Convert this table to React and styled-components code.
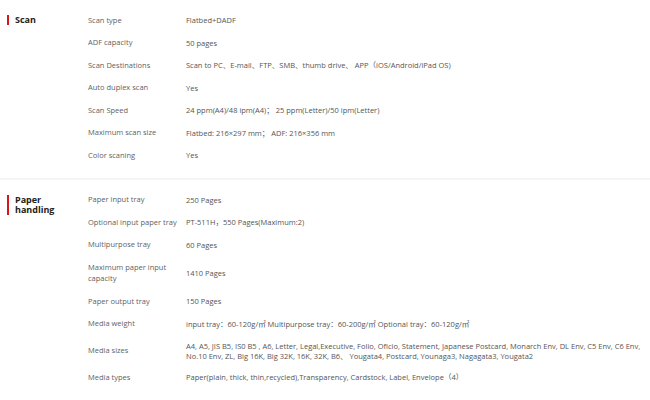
import React from "react";
import styled, {createGlobalStyle} from "styled-components";

const specs = [
    {
        title: "Scan",
        rows: [
            ["Scan type", "Flatbed+DADF"],
            ["ADF capacity", "50 pages"],
            ["Scan Destinations", "Scan to PC、E-mail、FTP、SMB、thumb drive、 APP（iOS/Android/iPad OS)"],
            ["Auto duplex scan", "Yes"],
            ["Scan Speed", "24 ppm(A4)/48 ipm(A4)； 25 ppm(Letter)/50 ipm(Letter)"],
            ["Maximum scan size", "Flatbed: 216×297 mm； ADF: 216×356 mm"],
            ["Color scaning", "Yes"]
        ]
    },
    {
        title: "Paper handling",
        rows: [
            ["Paper input tray", "250 Pages"],
            ["Optional input paper tray", "PT-511H，550 Pages(Maximum:2)"],
            ["Multipurpose tray", "60 Pages"],
            ["Maximum paper input capacity", "1410 Pages"],
            ["Paper output tray", "150 Pages"],
            ["Media weight", "input tray：60-120g/㎡ Multipurpose tray：60-200g/㎡ Optional tray：60-120g/㎡"],
            ["Media sizes", "A4, A5, JIS B5, IS0 B5 , A6, Letter, Legal,Executive, Folio, Oficio, Statement, Japanese Postcard, Monarch Env, DL Env, C5 Env, C6 Env, No.10 Env, ZL, Big 16K, Big 32K, 16K, 32K, B6、 Yougata4, Postcard, Younaga3, Nagagata3, Yougata2"],
            ["Media types", "Paper(plain, thick, thin,recycled),Transparency, Cardstock, Label, Envelope（4）"]
        ]
    }
];

const App = () => {
    return (
        <>
            <GlobalStyle/>
            <Page>
                {
                    specs.map((section) => (
                        <Section key={section.title}>
                            <Heading>
                                <Title>{section.title}</Title>
                            </Heading>
                            <Table>
                                {
                                    section.rows.map(([label, value]) => (
                                        <Row key={label}>
                                            <Label>{label}</Label>
                                            <Value>{value}</Value>
                                        </Row>
                                    ))
                                }
                            </Table>
                        </Section>
                    ))
                }
            </Page>
        </>
    )
}

const GlobalStyle = createGlobalStyle`
  * {
    box-sizing: border-box;
  }

  body {
    margin: 0;
    background: #fff;
    font-family: "Open Sans", "Noto Sans CJK SC", sans-serif;
  }
`;

const Page = styled.div`
  width: 650px;
`;

const Section = styled.section`
  display: flex;
  padding: 9px 0 11px;
  border-bottom: 2px solid #f5f5f5;
`;

const Heading = styled.div`
  flex: 0 0 88px;
  padding-left: 7px;
`;

const Title = styled.h3`
  margin: 6px 0 0;
  width: 50px;
  padding-left: 6px;
  border-left: 2px solid #d7141a;
  font-size: 9px;
  line-height: 10px;
  font-weight: 700;
  color: #222;
`;

const Table = styled.div`
  flex: 1;
  padding-right: 3px;
`;

const Row = styled.div`
  display: flex;
  align-items: center;
  padding: 5.5px 0;
`;

const Label = styled.div`
  flex: 0 0 98px;
  padding-right: 4px;
  font-size: 7.5px;
  line-height: 11.5px;
  color: #5f5f5f;
`;

const Value = styled.div`
  flex: 1;
  font-size: 7.5px;
  line-height: 10px;
  color: #555;
`;

export default App;
